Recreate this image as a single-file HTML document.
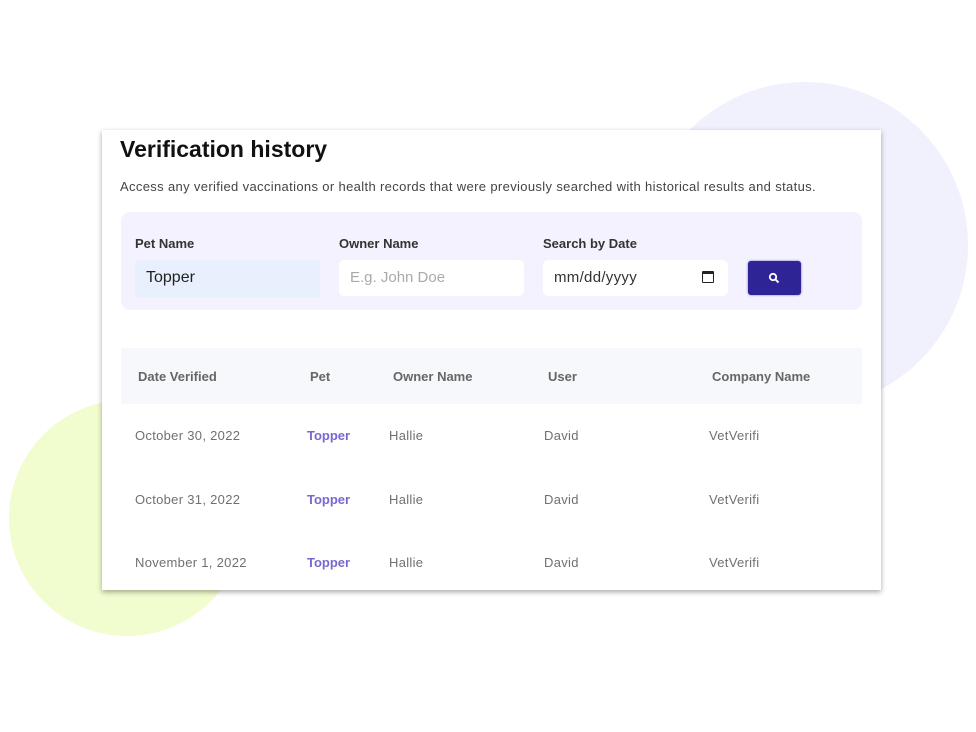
<!DOCTYPE html>
<html><head><meta charset="utf-8"><style>
*{margin:0;padding:0;box-sizing:border-box}
body{width:976px;height:732px;background:#fff;position:relative;overflow:hidden;font-family:"Liberation Sans",sans-serif}
.a{position:absolute;white-space:nowrap}
.c1{position:absolute;left:642px;top:82px;width:326px;height:326px;border-radius:50%;background:#f1f0fd}
.c2{position:absolute;left:9px;top:400px;width:236px;height:236px;border-radius:50%;background:#f1fccf}
.card{position:absolute;left:102px;top:130px;width:779px;height:460px;background:#fff;box-shadow:0 2px 5px rgba(0,0,0,.35)}
.lbl{font-size:13px;font-weight:bold;color:#333}
.h{font-size:13px;font-weight:bold;color:#666}
.d{font-size:13px;color:#707070;letter-spacing:0.3px}
.t{font-size:13px;font-weight:bold;color:#7a66d0}
</style></head><body>
<div class="c1"></div><div class="c2"></div>
<div class="card"></div>
<div class="a" style="left:120px;top:136px;font-size:23px;font-weight:bold;color:#111">Verification history</div>
<div class="a" style="left:120px;top:179px;font-size:13px;letter-spacing:0.35px;color:#444">Access any verified vaccinations or health records that were previously searched with historical results and status.</div>
<div class="a" style="left:121px;top:212px;width:741px;height:98px;background:#f3f2fe;border-radius:9px"></div>
<div class="a lbl" style="left:135px;top:236px">Pet Name</div>
<div class="a lbl" style="left:339px;top:236px">Owner Name</div>
<div class="a lbl" style="left:543px;top:236px">Search by Date</div>
<div class="a" style="left:135px;top:260px;width:185px;height:38px;background:#e8f0fe;border-radius:4px"></div>
<div class="a" style="left:146px;top:269px;font-size:16px;color:#222">Topper</div>
<div class="a" style="left:339px;top:260px;width:185px;height:36px;background:#fff;border-radius:5px"></div>
<div class="a" style="left:350px;top:269px;font-size:15px;color:#aaa">E.g. John Doe</div>
<div class="a" style="left:543px;top:260px;width:185px;height:36px;background:#fff;border-radius:5px"></div>
<div class="a" style="left:554px;top:269px;font-size:15px;color:#333;letter-spacing:0.3px">mm/dd/yyyy</div>
<div class="a" style="left:702px;top:271px;width:12px;height:12px;border:1.5px solid #222;border-top-width:3px;border-radius:1px"></div>
<div class="a" style="left:748px;top:261px;width:53px;height:34px;background:#2e2496;border-radius:3px;box-shadow:0 0 2px #6f64d8"></div>
<svg class="a" style="left:768px;top:272px" width="12" height="12" viewBox="0 0 12 12"><circle cx="5" cy="5" r="3.2" fill="none" stroke="#fff" stroke-width="1.8"/><path d="M7.3 7.3L10.5 10.5" stroke="#fff" stroke-width="2"/></svg>
<div class="a" style="left:121px;top:348px;width:741px;height:56px;background:#f7f8fb"></div>
<div class="a h" style="left:138px;top:369px">Date Verified</div>
<div class="a h" style="left:310px;top:369px">Pet</div>
<div class="a h" style="left:393px;top:369px">Owner Name</div>
<div class="a h" style="left:548px;top:369px">User</div>
<div class="a h" style="left:712px;top:369px">Company Name</div>

<div class="a d" style="left:135px;top:428px">October 30, 2022</div>
<div class="a t" style="left:307px;top:428px">Topper</div>
<div class="a d" style="left:389px;top:428px">Hallie</div>
<div class="a d" style="left:544px;top:428px">David</div>
<div class="a d" style="left:709px;top:428px">VetVerifi</div>

<div class="a d" style="left:135px;top:492px">October 31, 2022</div>
<div class="a t" style="left:307px;top:492px">Topper</div>
<div class="a d" style="left:389px;top:492px">Hallie</div>
<div class="a d" style="left:544px;top:492px">David</div>
<div class="a d" style="left:709px;top:492px">VetVerifi</div>

<div class="a d" style="left:135px;top:555px">November 1, 2022</div>
<div class="a t" style="left:307px;top:555px">Topper</div>
<div class="a d" style="left:389px;top:555px">Hallie</div>
<div class="a d" style="left:544px;top:555px">David</div>
<div class="a d" style="left:709px;top:555px">VetVerifi</div>
</body></html>
